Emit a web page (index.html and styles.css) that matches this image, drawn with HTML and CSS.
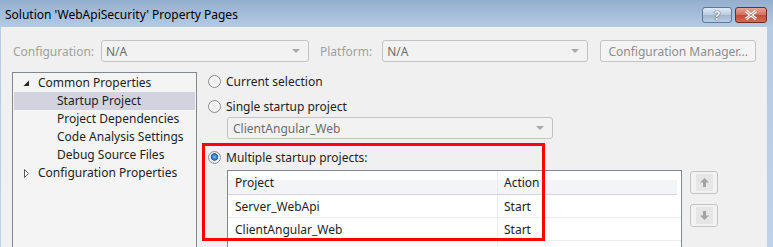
FILE: index.html
```html
<!DOCTYPE html>
<html lang="en">
<head>
    <meta charset="UTF-8">
    <title>Solution 'WebApiSecurity' Property Pages</title>
    <link rel="stylesheet" href="styles.css">
</head>
<body>
    <div class="window">
        <div class="titlebar">
            <span class="title">Solution 'WebApiSecurity' Property Pages</span>
            <div class="caption-buttons">
                <span class="cap help">?</span>
                <span class="cap close">
                    <svg width="14" height="10" viewBox="0 0 14 10"><path d="M2 1 L12 9 M12 1 L2 9" stroke="#fff" stroke-width="3"/><path d="M2 1 L12 9 M12 1 L2 9" stroke="#8b3a30" stroke-width="0.6" fill="none"/></svg>
                </span>
            </div>
        </div>
        <div class="client">
            <div class="toprow">
                <span class="label">Configuration:</span>
                <div class="combo config"><span>N/A</span><i class="caret"></i></div>
                <span class="label platform-label">Platform:</span>
                <div class="combo platform"><span>N/A</span><i class="caret"></i></div>
                <div class="btn">Configuration Manager...</div>
            </div>
            <div class="main">
                <div class="tree">
                    <div class="node">
                        <svg class="tri" width="7" height="7" viewBox="0 0 7 7"><path d="M6 0.5 L6 6 L0.5 6 Z" fill="#262626"/></svg>
                        Common Properties
                    </div>
                    <div class="node child selected">Startup Project</div>
                    <div class="node child">Project Dependencies</div>
                    <div class="node child">Code Analysis Settings</div>
                    <div class="node child">Debug Source Files</div>
                    <div class="node">
                        <svg class="tri" width="7" height="9" viewBox="0 0 7 9"><path d="M1.5 0.5 L5.5 4.5 L1.5 8.5 Z" fill="#fff" stroke="#5a5a5a" stroke-width="1"/></svg>
                        Configuration Properties
                    </div>
                </div>
                <div class="content">
                    <div class="radio-row first"><i class="radio"></i>Current selection</div>
                    <div class="radio-row"><i class="radio"></i>Single startup project</div>
                    <div class="combo single"><span>ClientAngular_Web</span><i class="caret"></i></div>
                    <div class="radio-row multi"><i class="radio checked"></i>Multiple startup projects:</div>
                    <div class="grid-area">
                        <div class="grid">
                            <div class="grow head"><span class="c1">Project</span><span class="c2">Action</span></div>
                            <div class="grow"><span class="c1">Server_WebApi</span><span class="c2">Start</span></div>
                            <div class="grow"><span class="c1">ClientAngular_Web</span><span class="c2">Start</span></div>
                            <div class="grow"><span class="c1"></span><span class="c2"></span></div>
                        </div>
                        <div class="movers">
                            <div class="mover"><svg width="9" height="9" viewBox="0 0 9 9"><path d="M4.5 0 L9 4.5 L6 4.5 L6 9 L3 9 L3 4.5 L0 4.5 Z" fill="#a3a3a3"/></svg></div>
                            <div class="mover"><svg width="9" height="9" viewBox="0 0 9 9"><path d="M4.5 9 L9 4.5 L6 4.5 L6 0 L3 0 L3 4.5 L0 4.5 Z" fill="#a3a3a3"/></svg></div>
                        </div>
                    </div>
                    <div class="highlight"></div>
                </div>
            </div>
        </div>
    </div>
</body>
</html>
```

FILE: styles.css
```css
html, body {
    margin: 0;
    padding: 0;
    height: 247px;
    overflow: hidden;
}
body {
    font-family: 'Segoe UI', 'Noto Sans', sans-serif;
    font-size: 12px;
    color: #1e1e1e;
    background: #b9d1ea;
}
.window {
    width: 773px;
    height: 247px;
    background: linear-gradient(#93aecd 0px, #b4cbe4 27px, #bcd3ec 247px);
    padding: 0 6px 0 1px;
    box-sizing: border-box;
    overflow: hidden;
}
.titlebar {
    height: 27px;
    display: flex;
    align-items: flex-start;
    justify-content: space-between;
}
.title {
    margin: 6px 0 0 4px;
    color: #000;
}
.caption-buttons {
    display: flex;
    gap: 3px;
    margin-top: 7px;
}
.cap {
    height: 16px;
    box-sizing: border-box;
    border: 1px solid #5d7899;
    border-radius: 3px;
    display: flex;
    align-items: center;
    justify-content: center;
}
.help {
    width: 30px;
    background: linear-gradient(#dfe9f5 0%, #b9cbe0 50%, #9fb6d2 51%, #b8cde6 100%);
    color: #fff;
    font-weight: bold;
    font-size: 13px;
    text-shadow: 0 0 1px #333, 0 0 1px #333;
}
.close {
    width: 32px;
    border-color: #6e2c25;
    background: linear-gradient(#e8a493 0%, #d26f5c 50%, #c24a36 51%, #d56b52 100%);
}
.client {
    background: #f0f0f0;
    height: 220px;
}
.toprow {
    display: flex;
    align-items: center;
    padding: 13px 0 0 12px;
    height: 22px;
}
.label {
    color: #a0a0a0;
    width: 88px;
}
.platform-label {
    width: auto;
    margin: 0 10px 0 11px;
}
.combo {
    height: 22px;
    box-sizing: border-box;
    border: 1px solid #c3c3c3;
    border-radius: 3px;
    background: #f2f2f2;
    display: flex;
    align-items: center;
    justify-content: space-between;
    padding: 0 8px 0 4px;
    color: #6d6d6d;
}
.combo.config { width: 208px; }
.combo.platform { width: 206px; }
.caret {
    width: 0;
    height: 0;
    border-left: 4px solid transparent;
    border-right: 4px solid transparent;
    border-top: 4px solid #a8a8a8;
}
.btn {
    margin-left: 12px;
    width: 156px;
    height: 22px;
    box-sizing: border-box;
    border: 1px solid #c3c3c3;
    border-radius: 3px;
    background: #f4f4f4;
    color: #8d8d8d;
    display: flex;
    align-items: center;
    justify-content: center;
}
.main {
    display: flex;
    padding: 10px 0 0 11px;
}
.tree {
    width: 185px;
    height: 200px;
    box-sizing: border-box;
    border: 1px solid #828790;
    background: #f4f4f4;
    padding: 1px 1px 0 1px;
}
.node {
    height: 18px;
    line-height: 18px;
    padding-left: 24px;
    display: flex;
    align-items: center;
    color: #1e1e1e;
}
.node.child {
    padding-left: 43px;
}
.node.selected {
    background: #d2d3de;
}
.tri {
    margin: 0 8px 0 -15px;
}
.content {
    position: relative;
    flex: 1;
    padding-left: 11px;
}
.radio-row {
    display: flex;
    align-items: center;
    height: 18px;
    margin-top: 7px;
}
.radio-row.first {
    margin-top: 0;
}
.radio {
    width: 13px;
    height: 13px;
    box-sizing: border-box;
    border-radius: 50%;
    border: 1px solid #8e8f8f;
    background: radial-gradient(circle at 50% 50%, #e6e6e6 0%, #f8f8f8 60%, #dcdcdc 100%);
    margin-right: 5px;
}
.radio.checked {
    background: radial-gradient(circle at 50% 45%, #7fc4f4 0%, #2976c4 32%, #1f5c9f 42%, #f2f2f2 50%, #e0e0e0 100%);
}
.combo.single {
    margin: 2px 0 0 19px;
    width: 326px;
    background: #f2f2f2;
    color: #6d6d6d;
    padding-left: 5px;
}
.radio-row.multi {
    margin-top: 9px;
}
.grid-area {
    display: flex;
    margin: 4px 0 0 19px;
}
.grid {
    width: 455px;
    height: 80px;
    box-sizing: border-box;
    border: 1px solid #828790;
    background: #fff;
}
.grow {
    display: flex;
    height: 22px;
    border-bottom: 1px solid #ececec;
    align-items: center;
}
.grow.head {
    height: 23px;
    background: linear-gradient(#ffffff 0%, #ffffff 40%, #f2f4f7 41%, #f2f4f7 100%);
    border-bottom: 1px solid #d5d5d5;
    margin-right: 4px;
}
.c1 {
    width: 270px;
    padding-left: 7px;
    box-sizing: border-box;
    align-self: stretch;
    display: flex;
    align-items: center;
    border-right: 1px solid #ececec;
}
.c2 {
    padding-left: 6px;
}
.movers {
    display: flex;
    flex-direction: column;
    gap: 10px;
    margin: 1px 0 0 8px;
}
.mover {
    width: 28px;
    height: 23px;
    box-sizing: border-box;
    border: 1px solid #c3c3c3;
    border-radius: 3px;
    background: #f2f2f2;
    display: flex;
    align-items: center;
    justify-content: center;
}
.mover svg {
    padding: 4px;
    background: #e6e6e6;
}
.highlight {
    position: absolute;
    left: 5px;
    top: 71px;
    width: 343px;
    height: 98px;
    box-sizing: border-box;
    border: 3px solid #ff0000;
}
```
